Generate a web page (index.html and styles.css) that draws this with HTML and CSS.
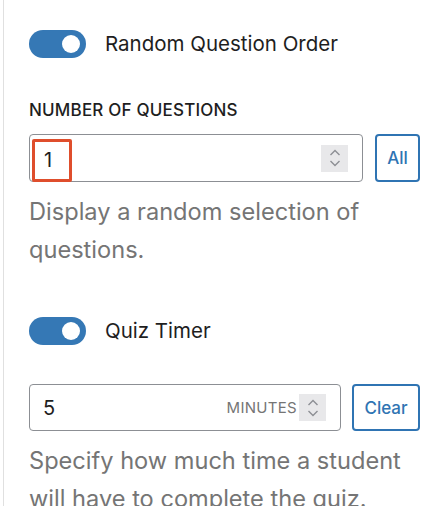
FILE: index.html
```html
<!DOCTYPE html>
<html>
<head>
<meta charset="utf-8">
<link rel="stylesheet" href="styles.css">
</head>
<body>
<div class="panel">
  <div class="toggle-row">
    <span class="toggle"><span class="knob"></span></span>
    <span class="toggle-label">Random Question Order</span>
  </div>

  <div class="field">
    <div class="field-label">NUMBER OF QUESTIONS</div>
    <div class="input-row">
      <div class="input">
        <span class="value highlighted">1</span>
        <span class="spacer"></span>
        <span class="spinner">
          <svg width="12" height="20" viewBox="0 0 12 20"><path d="M1.5 7 L6 2.5 L10.5 7" fill="none" stroke="#8d8f94" stroke-width="1.4"/><path d="M1.5 13 L6 17.5 L10.5 13" fill="none" stroke="#8d8f94" stroke-width="1.4"/></svg>
        </span>
      </div>
      <button class="btn btn-all">All</button>
    </div>
    <p class="help">Display a random selection of questions.</p>
  </div>

  <div class="toggle-row second">
    <span class="toggle"><span class="knob"></span></span>
    <span class="toggle-label">Quiz Timer</span>
  </div>

  <div class="field timer">
    <div class="input-row">
      <div class="input">
        <span class="value">5</span>
        <span class="spacer"></span>
        <span class="suffix">MINUTES</span>
        <span class="spinner">
          <svg width="12" height="20" viewBox="0 0 12 20"><path d="M1.5 7 L6 2.5 L10.5 7" fill="none" stroke="#8d8f94" stroke-width="1.4"/><path d="M1.5 13 L6 17.5 L10.5 13" fill="none" stroke="#8d8f94" stroke-width="1.4"/></svg>
        </span>
      </div>
      <button class="btn btn-clear">Clear</button>
    </div>
    <p class="help">Specify how much time a student will have to complete the quiz.</p>
  </div>
</div>
</body>
</html>
```

FILE: styles.css
```css
html, body {
  margin: 0;
  padding: 0;
  background: #ffffff;
  height: 100%;
  overflow: hidden;
}
body {
  font-family: Inter, "Liberation Sans", sans-serif;
  color: #1e1e1e;
  padding-left: 3px;
}
.panel {
  border-left: 1px solid #e0e0e0;
  min-height: 506px;
  padding: 29px 12px 0 25px;
  box-sizing: border-box;
}
.toggle-row {
  display: flex;
  align-items: center;
  gap: 19px;
  height: 29px;
}
.toggle-row.second {
  margin-top: 47px;
}
.toggle {
  width: 57px;
  height: 28px;
  border-radius: 14px;
  background: #3578b5;
  display: flex;
  align-items: center;
  justify-content: flex-end;
  padding-right: 6px;
  box-sizing: border-box;
  flex: none;
}
.knob {
  width: 18px;
  height: 18px;
  border-radius: 50%;
  background: #ffffff;
}
.toggle-label {
  font-size: 20.5px;
  color: #1e1e1e;
}
.field {
  margin-top: 44px;
}
.field.timer {
  margin-top: 39px;
}
.field-label {
  font-size: 17px;
  font-weight: 500;
  letter-spacing: 0.2px;
  color: #1e1e1e;
  line-height: 17px;
  margin-bottom: 15px;
}
.input-row {
  display: flex;
  align-items: stretch;
  gap: 12px;
}
.timer .input-row {
  gap: 11px;
}
.input {
  flex: 1;
  height: 48px;
  border: 1px solid #8c8f94;
  border-radius: 4px;
  display: flex;
  align-items: center;
  padding: 0 14px 0 2px;
  box-sizing: border-box;
}
.timer .input {
  height: 47px;
  padding-left: 13px;
}
.value {
  font-size: 20px;
  color: #1e1e1e;
}
.highlighted {
  border: 3px solid #df4e2c;
  border-radius: 2px;
  height: 43px;
  width: 40px;
  box-sizing: border-box;
  display: flex;
  align-items: center;
  padding-left: 9px;
  margin-top: 3px;
  margin-bottom: -1px;
}
.spacer {
  flex: 1;
}
.suffix {
  font-size: 15px;
  color: #757575;
  letter-spacing: 0.3px;
  margin-right: 2px;
}
.spinner {
  width: 27px;
  height: 27px;
  background: #e8e8ea;
  display: flex;
  align-items: center;
  justify-content: center;
}
.btn {
  font-family: Inter, "Liberation Sans", sans-serif;
  background: #ffffff;
  border: 2px solid #2f74b3;
  border-radius: 4px;
  color: #2f74b3;
  font-size: 17px;
  font-weight: 500;
  padding: 0 8px;
  height: 48px;
}
.btn-all {
  width: 45px;
}
.btn-clear {
  width: 68px;
  height: 47px;
}
.help {
  margin: 11px 0 0 0;
  font-size: 23.6px;
  line-height: 38px;
  color: #757575;
}
```
